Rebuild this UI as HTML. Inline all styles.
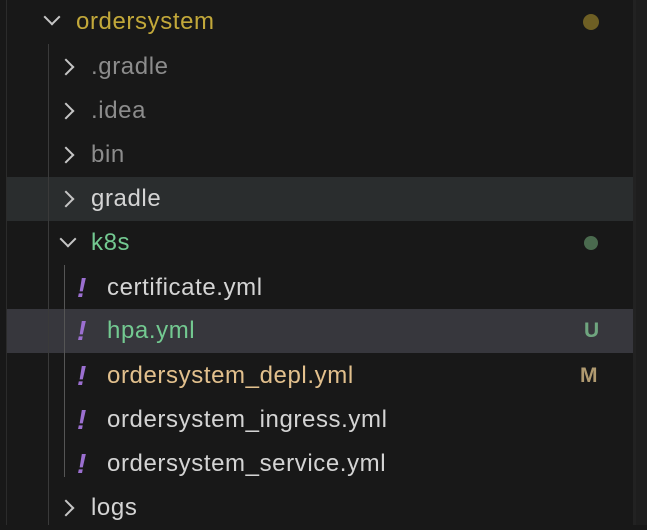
<!DOCTYPE html><html><head><style>
body{margin:0;width:647px;height:525px;background:#181818;position:relative;overflow:hidden;font-family:"Liberation Sans",sans-serif;font-size:24px;letter-spacing:.6px}
.r{position:absolute;left:7px;width:626px;height:44px;line-height:44px}
.t{position:absolute;white-space:nowrap}
.ch{position:absolute;width:10px;height:10px;border-right:2px solid #c5c5c5;border-bottom:2px solid #c5c5c5}
.ex{position:absolute;color:#9b6fd0;font-style:italic;font-weight:bold;font-size:28px}
.vl{position:absolute;width:1px;background:#3a3a3a}
</style></head><body>
<div style="position:absolute;left:6px;top:0;width:1px;height:525px;background:#2b2b2b"></div>
<div style="position:absolute;left:633px;top:0;width:3px;height:525px;background:#222"></div>
<div style="position:absolute;left:636px;top:0;width:11px;height:525px;background:#1e1e1e"></div>
<div class="r" style="top:177px;background:#2a2d2e"></div>
<div class="r" style="top:309px;background:#37373d"></div>
<div class="vl" style="left:48px;top:44px;height:481px"></div>
<div class="vl" style="left:64px;top:265px;height:212px;background:#555"></div>

<div class="ch" style="left:46px;top:11px;transform:rotate(45deg)"></div>
<div class="t" style="left:76px;top:0;line-height:44px;color:#c2a83a">ordersystem</div>
<div style="position:absolute;left:583px;top:14px;width:16px;height:16px;border-radius:50%;background:#6e5f24"></div>

<div class="ch" style="left:60px;top:61px;transform:rotate(-45deg)"></div>
<div class="t" style="left:91px;top:45px;line-height:44px;color:#8c8c8c">.gradle</div>
<div class="ch" style="left:60px;top:105px;transform:rotate(-45deg)"></div>
<div class="t" style="left:91px;top:89px;line-height:44px;color:#8c8c8c">.idea</div>
<div class="ch" style="left:60px;top:149px;transform:rotate(-45deg)"></div>
<div class="t" style="left:91px;top:133px;line-height:44px;color:#8c8c8c">bin</div>
<div class="ch" style="left:60px;top:193px;transform:rotate(-45deg)"></div>
<div class="t" style="left:91px;top:177px;line-height:44px;color:#d4d4d4">gradle</div>
<div class="ch" style="left:62px;top:233px;transform:rotate(45deg)"></div>
<div class="t" style="left:91px;top:221px;line-height:44px;color:#73c991">k8s</div>
<div style="position:absolute;left:584px;top:236px;width:14px;height:14px;border-radius:50%;background:#4a6a4e"></div>

<div class="ex" style="left:77px;top:266px;line-height:44px">!</div>
<div class="t" style="left:107px;top:266px;line-height:44px;color:#d4d4d4">certificate.yml</div>
<div class="ex" style="left:77px;top:309px;line-height:44px">!</div>
<div class="t" style="left:107px;top:309px;line-height:44px;color:#73c991">hpa.yml</div>
<div class="t" style="left:584px;top:309px;line-height:44px;color:#6fa57f;font-weight:bold;font-size:21px">U</div>
<div class="ex" style="left:77px;top:354px;line-height:44px">!</div>
<div class="t" style="left:107px;top:354px;line-height:44px;color:#e2c08d">ordersystem_depl.yml</div>
<div class="t" style="left:580px;top:354px;line-height:44px;color:#b09a70;font-weight:bold;font-size:21px">M</div>
<div class="ex" style="left:77px;top:398px;line-height:44px">!</div>
<div class="t" style="left:107px;top:398px;line-height:44px;color:#d4d4d4">ordersystem_ingress.yml</div>
<div class="ex" style="left:77px;top:442px;line-height:44px">!</div>
<div class="t" style="left:107px;top:442px;line-height:44px;color:#d4d4d4">ordersystem_service.yml</div>
<div class="ch" style="left:60px;top:502px;transform:rotate(-45deg)"></div>
<div class="t" style="left:91px;top:486px;line-height:44px;color:#d4d4d4">logs</div>
</body></html>
